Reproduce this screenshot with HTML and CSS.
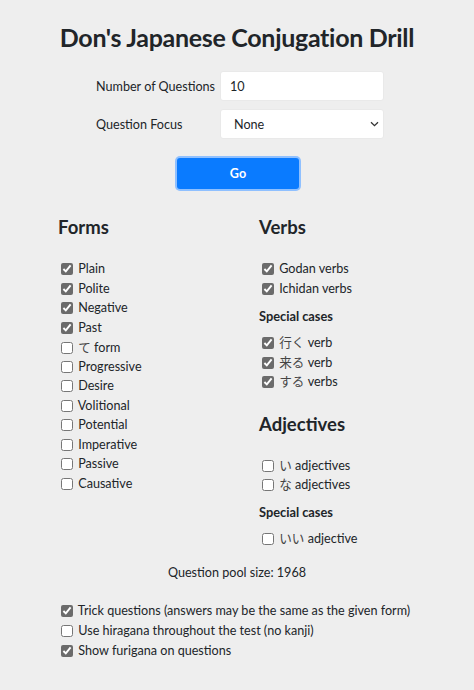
FILE: index.html
```html
<!DOCTYPE html>
<html lang="en">
<head>
<meta charset="utf-8">
<title>Don's Japanese Conjugation Drill</title>
<link rel="stylesheet" href="styles.css">
</head>
<body>
<div class="container">
  <h1 class="title">Don's Japanese Conjugation Drill</h1>

  <div class="settings">
    <div class="row">
      <label class="row-label" for="num">Number of Questions</label>
      <input id="num" class="field" type="text" value="10">
    </div>
    <div class="row">
      <label class="row-label" for="focus">Question Focus</label>
      <div class="select-wrap">
        <select id="focus" class="field select">
          <option>None</option>
        </select>
        <svg class="chevron" width="9" height="6" viewBox="0 0 9 6"><path d="M1 1.2 L4.5 4.6 L8 1.2" fill="none" stroke="#333" stroke-width="1.3"/></svg>
      </div>
    </div>
  </div>

  <div class="go-row">
    <button class="go" type="button">Go</button>
  </div>

  <div class="columns">
    <div class="col">
      <h2 class="heading">Forms</h2>
      <ul class="list first">
        <li><label><input type="checkbox" checked> Plain</label></li>
        <li><label><input type="checkbox" checked> Polite</label></li>
        <li><label><input type="checkbox" checked> Negative</label></li>
        <li><label><input type="checkbox" checked> Past</label></li>
        <li><label><input type="checkbox"> <span class="jp">て</span> form</label></li>
        <li><label><input type="checkbox"> Progressive</label></li>
        <li><label><input type="checkbox"> Desire</label></li>
        <li><label><input type="checkbox"> Volitional</label></li>
        <li><label><input type="checkbox"> Potential</label></li>
        <li><label><input type="checkbox"> Imperative</label></li>
        <li><label><input type="checkbox"> Passive</label></li>
        <li><label><input type="checkbox"> Causative</label></li>
      </ul>
    </div>
    <div class="col">
      <h2 class="heading">Verbs</h2>
      <ul class="list first">
        <li><label><input type="checkbox" checked> Godan verbs</label></li>
        <li><label><input type="checkbox" checked> Ichidan verbs</label></li>
      </ul>
      <h3 class="sub">Special cases</h3>
      <ul class="list after-sub">
        <li><label><input type="checkbox" checked> <span class="jp">行く</span> verb</label></li>
        <li><label><input type="checkbox" checked> <span class="jp">来る</span> verb</label></li>
        <li><label><input type="checkbox" checked> <span class="jp">する</span> verbs</label></li>
      </ul>
      <h2 class="heading adj">Adjectives</h2>
      <ul class="list first adj-list">
        <li><label><input type="checkbox"> <span class="jp">い</span> adjectives</label></li>
        <li><label><input type="checkbox"> <span class="jp">な</span> adjectives</label></li>
      </ul>
      <h3 class="sub">Special cases</h3>
      <ul class="list after-sub">
        <li><label><input type="checkbox"> <span class="jp">いい</span> adjective</label></li>
      </ul>
    </div>
  </div>

  <p class="pool">Question pool size: 1968</p>

  <ul class="list options">
    <li><label><input type="checkbox" checked> Trick questions (answers may be the same as the given form)</label></li>
    <li><label><input type="checkbox"> Use hiragana throughout the test (no kanji)</label></li>
    <li><label><input type="checkbox" checked> Show furigana on questions</label></li>
  </ul>
</div>
</body>
</html>
```

FILE: styles.css
```css
html, body {
  margin: 0;
  padding: 0;
}
body {
  background: #eeeeee;
  color: #212529;
  font-family: Lato, "Noto Sans", "Noto Sans CJK JP", sans-serif;
  font-size: 12.6px;
}
.container {
  width: 358px;
  margin: 0 auto;
}
.title {
  margin: 21px 0 0;
  font-size: 25px;
  line-height: 32px;
  font-weight: 700;
  letter-spacing: -0.3px;
  text-align: center;
  white-space: nowrap;
}
.settings {
  margin-top: 18px;
  display: flex;
  flex-direction: column;
  gap: 8px;
  align-items: center;
  padding-left: 6px;
}
.row {
  display: flex;
  align-items: center;
}
.row-label {
  width: 124px;
  white-space: nowrap;
}
.field {
  box-sizing: border-box;
  width: 164px;
  height: 30px;
  border: 1px solid #e9e9e9;
  border-radius: 3px;
  background: #fff;
  color: #212529;
  font-family: inherit;
  font-size: 12.6px;
  padding: 0 9px;
  outline: none;
}
.select-wrap {
  position: relative;
}
.select {
  appearance: none;
  -webkit-appearance: none;
  padding-left: 13px;
  display: block;
}
.chevron {
  position: absolute;
  right: 5px;
  top: 12px;
  pointer-events: none;
}
.go-row {
  display: flex;
  justify-content: center;
  margin-top: 19px;
}
.go {
  width: 122px;
  height: 31px;
  margin-left: 2px;
  border: none;
  border-radius: 3px;
  background: #0a7bff;
  color: #fff;
  font-family: inherit;
  font-weight: 700;
  font-size: 12.6px;
  box-shadow: 0 0 0 2px #8fc0ff;
}
.columns {
  display: grid;
  grid-template-columns: 201px 1fr;
  margin-top: 26px;
}
.heading {
  margin: 0;
  font-size: 18.5px;
  line-height: 24px;
  font-weight: 700;
}
.heading.adj {
  margin-top: 21px;
}
.sub {
  margin: 8px 0 0;
  font-size: 12.8px;
  line-height: 20px;
  font-weight: 700;
}
.list {
  list-style: none;
  margin: 0;
  padding: 0;
}
.list li {
  line-height: 19.5px;
  height: 19.5px;
  white-space: nowrap;
}
.list label {
  display: block;
}
.list.first {
  margin-top: 20px;
}
.list.first.adj-list {
  margin-top: 19px;
}
.list.after-sub {
  margin-top: 6px;
}
.list input[type="checkbox"] {
  width: 12px;
  height: 12px;
  margin: 0 2px 0 3px;
  vertical-align: -2px;
  accent-color: #6b6b6b;
}
.jp {
  font-family: "Noto Sans CJK JP", sans-serif;
  font-weight: 400;
  color: #444;
}
.pool {
  margin: 16px 0 0;
  line-height: 20px;
  text-align: center;
}
.list.options {
  margin-top: 18px;
}
.list.options li {
  height: 20px;
  line-height: 20px;
}
```
